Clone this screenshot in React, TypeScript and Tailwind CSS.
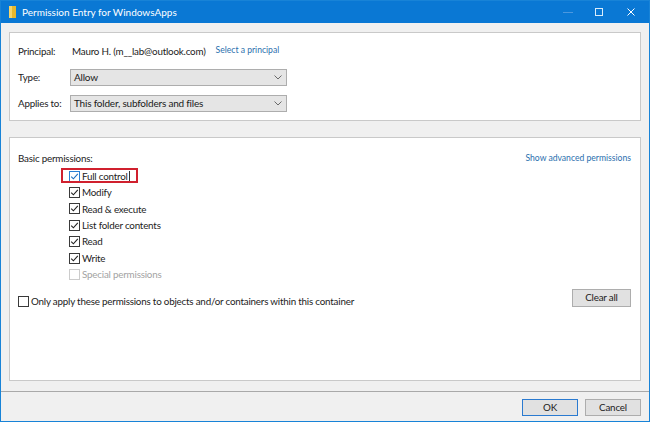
import React from "react";

const font = { fontFamily: 'Lato, "Noto Sans", sans-serif' };

function Check({ blue = false }: { blue?: boolean }) {
  return (
    <svg width="11" height="11" viewBox="0 0 11 11" className="shrink-0">
      <rect x="0.5" y="0.5" width="10" height="10" fill="#ffffff" stroke={blue ? "#2a7fd4" : "#3a3a3a"} />
      <path d="M2.2 5.6 L4.4 7.8 L8.8 2.8" fill="none" stroke={blue ? "#1f6fc0" : "#222222"} strokeWidth="1.1" />
    </svg>
  );
}

function Empty({ disabled = false }: { disabled?: boolean }) {
  return (
    <svg width="11" height="11" viewBox="0 0 11 11" className="shrink-0">
      <rect x="0.5" y="0.5" width="10" height="10" fill="#ffffff" stroke={disabled ? "#cccccc" : "#3a3a3a"} />
    </svg>
  );
}

function Chevron() {
  return (
    <svg width="8" height="5" viewBox="0 0 8 5">
      <path d="M0.5 0.5 L4 4 L7.5 0.5" fill="none" stroke="#6a6a6a" strokeWidth="1" />
    </svg>
  );
}

function Select({ value }: { value: string }) {
  return (
    <div className="w-[217px] h-[17px] bg-[#e5e5e5] border border-[#adadad] flex items-center justify-between pl-[3px] pr-[4px] text-[10px] text-[#1a1a1a]">
      <span>{value}</span>
      <Chevron />
    </div>
  );
}

export default function App() {
  const perms: { label: string; checked: boolean; disabled?: boolean }[] = [
    { label: "Modify", checked: true },
    { label: "Read & execute", checked: true },
    { label: "List folder contents", checked: true },
    { label: "Read", checked: true },
    { label: "Write", checked: true },
    { label: "Special permissions", checked: false, disabled: true },
  ];
  return (
    <div style={font} className="w-[650px] h-[422px] bg-[#f0f0f0] border border-[#1883d7] flex flex-col overflow-hidden text-[9.8px] tracking-[-0.2px] text-[#222222]">
      {/* Title bar */}
      <div className="h-[22px] bg-[#0a78d4] flex items-center shrink-0 tracking-normal">
        <div className="w-[21px] flex justify-center pl-[2px]">
          <svg width="8" height="12" viewBox="0 0 8 12">
            <rect x="0" y="0" width="7" height="12" fill="#e8b82e" />
            <rect x="0" y="0" width="3" height="12" fill="#f6d56a" />
          </svg>
        </div>
        <span className="text-white text-[10px]">Permission Entry for WindowsApps</span>
        <div className="ml-auto flex items-center h-full">
          <div className="w-[30px] h-full flex items-center justify-center">
            <div className="w-[10px] h-px bg-[#4c98df]" />
          </div>
          <div className="w-[32px] h-full flex items-center justify-center">
            <div className="w-[8px] h-[8px] border border-[#d9ecfb]" />
          </div>
          <div className="w-[34px] h-full flex items-center justify-center pr-[2px]">
            <svg width="8" height="8" viewBox="0 0 8 8">
              <path d="M0.5 0.5 L7.5 7.5 M7.5 0.5 L0.5 7.5" stroke="#ffffff" strokeWidth="1" />
            </svg>
          </div>
        </div>
      </div>

      {/* Content */}
      <div className="flex-1 flex flex-col px-[8px] pt-[9px]">
        {/* Top panel */}
        <div className="h-[89px] bg-white border border-[#c9c9c9] pl-[8px] pt-[10px] flex flex-col gap-[9px] shrink-0">
          <div className="h-[17px] flex items-center">
            <span className="w-[54px]">Principal:</span>
            <span>Mauro H. (m__lab@outlook.com)</span>
            <span className="ml-[10px] text-[8.6px] tracking-normal text-[#2a6fae] -translate-y-px">Select a principal</span>
          </div>
          <div className="h-[17px] flex items-center">
            <span className="w-[52px]">Type:</span>
            <Select value="Allow" />
          </div>
          <div className="h-[17px] flex items-center">
            <span className="w-[52px]">Applies to:</span>
            <Select value="This folder, subfolders and files" />
          </div>
        </div>

        {/* Permissions panel */}
        <div className="mt-[16px] h-[244px] bg-white border border-[#c9c9c9] pl-[8px] pr-[9px] pt-[12px] flex flex-col shrink-0">
          <div className="h-[16px] flex items-center justify-between">
            <span>Basic permissions:</span>
            <span className="text-[8.6px] tracking-normal text-[#2a6fae]">Show advanced permissions</span>
          </div>
          <div className="mt-[2px] pl-[51px] flex flex-col">
            <div className="h-[16.4px] flex items-center relative">
              <div className="absolute left-[-8px] top-[0px] w-[77px] h-[15px] border-2 border-[#d0202e]" />
              <Check blue />
              <span className="ml-[2px]">Full control</span>
              <span className="w-px h-[11px] bg-[#333] ml-[1px]" />
            </div>
            {perms.map((p) => (
              <div key={p.label} className="h-[16.4px] flex items-center">
                {p.checked ? <Check /> : <Empty disabled={p.disabled} />}
                <span className={"ml-[2px] " + (p.disabled ? "text-[#a3a3a3]" : "")}>{p.label}</span>
              </div>
            ))}
          </div>
          <div className="mt-[6px] flex items-start justify-between">
            <div className="flex items-center pt-[5px]">
              <Empty />
              <span className="ml-[2px]">Only apply these permissions to objects and/or containers within this container</span>
            </div>
            <div className="w-[59px] h-[18px] bg-[#e1e1e1] border border-[#adadad] flex items-center justify-center">
              Clear all
            </div>
          </div>
        </div>

        {/* Bottom */}
        <div className="mt-[10px] -mx-[8px] border-t border-[#a9a9a9] flex justify-end gap-[7px] pt-[7px] pr-[8px]">
          <div className="w-[56px] h-[17px] bg-[#e1e1e1] border border-[#2a7ad0] flex items-center justify-center">OK</div>
          <div className="w-[56px] h-[17px] bg-[#e1e1e1] border border-[#adadad] flex items-center justify-center">Cancel</div>
        </div>
      </div>
    </div>
  );
}
